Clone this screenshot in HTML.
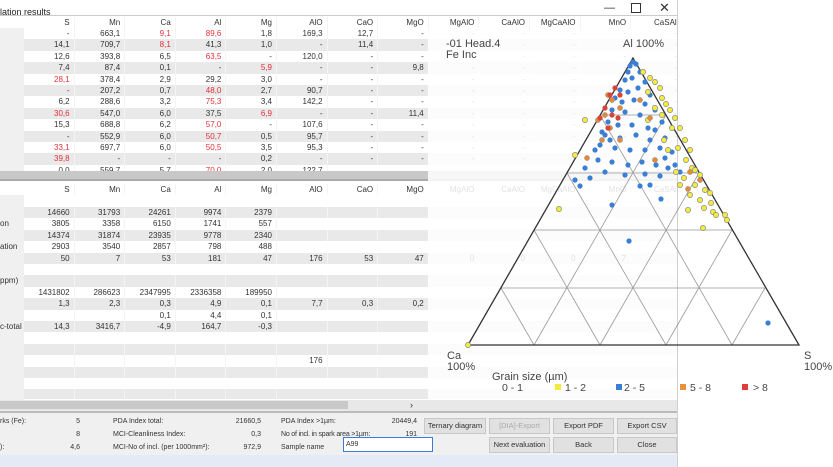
<!DOCTYPE html><html><head><meta charset="utf-8"><style>
*{margin:0;padding:0;box-sizing:border-box}
body{width:833px;height:467px;overflow:hidden;background:#fff;font-family:"Liberation Sans",sans-serif;font-size:8px;color:#333;position:relative}
.a{position:absolute}
.row{position:absolute;left:0;width:678px;height:11.4px;display:flex;line-height:11.4px}
.row .l{width:24px;background:#f0f0f0;flex:none;white-space:nowrap;overflow:visible;padding-left:0}
.row .c{width:50.6px;flex:none;text-align:right;padding-right:4px;border-right:1px solid #f4f4f4}
.g{background:#e9e9e9}
.r{color:#e0303a}
.btn{position:absolute;background:#e1e1e1;border:1px solid #c8c8c8;text-align:center;line-height:14px;height:16px;font-size:7.5px}
.s{font-size:7px}
</style></head><body>
<div class="a" style="left:0;top:0;width:678px;height:467px;background:#fff"></div>
<div class="a" style="left:0;top:7px;font-size:9px;color:#222">lation results</div>
<div class="a" style="left:604px;top:2px;font-size:11px;color:#333">&#8212;</div>
<div class="a" style="left:631px;top:3px;width:10px;height:10px;border:1px solid #333"></div>
<div class="a" style="left:659px;top:0px;font-size:13px;color:#333">&#x2715;</div>
<div class="a" style="left:0;top:15px;width:678px;height:1px;background:#ccc"></div>
<div class="a" style="left:0;top:17px;width:24px;height:155px;background:#f0f0f0"></div>

<div class="row" style="top:17px"><div class="l" style="background:#fff"></div><div class="c">S</div><div class="c">Mn</div><div class="c">Ca</div><div class="c">Al</div><div class="c">Mg</div><div class="c">AlO</div><div class="c">CaO</div><div class="c">MgO</div><div class="c">MgAlO</div><div class="c">CaAlO</div><div class="c">MgCaAlO</div><div class="c">MnO</div><div class="c">CaSAl</div></div>
<div class="row" style="top:28px"><div class="l"></div><div class="c">-</div><div class="c">663,1</div><div class="c r">9,1</div><div class="c r">89,6</div><div class="c">1,8</div><div class="c">169,3</div><div class="c">12,7</div><div class="c">-</div><div class="c">-</div><div class="c">-</div><div class="c">-</div><div class="c">-</div><div class="c">-</div></div>
<div class="row g" style="top:39.4px"><div class="l"></div><div class="c">14,1</div><div class="c">709,7</div><div class="c r">8,1</div><div class="c">41,3</div><div class="c">1,0</div><div class="c">-</div><div class="c">11,4</div><div class="c">-</div><div class="c">-</div><div class="c">-</div><div class="c">-</div><div class="c">-</div><div class="c">-</div></div>
<div class="row" style="top:50.8px"><div class="l"></div><div class="c">12,6</div><div class="c">393,8</div><div class="c">6,5</div><div class="c r">63,5</div><div class="c">-</div><div class="c">120,0</div><div class="c">-</div><div class="c">-</div><div class="c">-</div><div class="c">-</div><div class="c">-</div><div class="c">-</div><div class="c">-</div></div>
<div class="row g" style="top:62.2px"><div class="l"></div><div class="c">7,4</div><div class="c">87,4</div><div class="c">0,1</div><div class="c">-</div><div class="c r">5,9</div><div class="c">-</div><div class="c">-</div><div class="c">9,8</div><div class="c">-</div><div class="c">-</div><div class="c">-</div><div class="c">-</div><div class="c">-</div></div>
<div class="row" style="top:73.6px"><div class="l"></div><div class="c r">28,1</div><div class="c">378,4</div><div class="c">2,9</div><div class="c">29,2</div><div class="c">3,0</div><div class="c">-</div><div class="c">-</div><div class="c">-</div><div class="c">-</div><div class="c">-</div><div class="c">-</div><div class="c">-</div><div class="c">-</div></div>
<div class="row g" style="top:85px"><div class="l"></div><div class="c">-</div><div class="c">207,2</div><div class="c">0,7</div><div class="c r">48,0</div><div class="c">2,7</div><div class="c">90,7</div><div class="c">-</div><div class="c">-</div><div class="c">-</div><div class="c">-</div><div class="c">-</div><div class="c">-</div><div class="c">-</div></div>
<div class="row" style="top:96.4px"><div class="l"></div><div class="c">6,2</div><div class="c">288,6</div><div class="c">3,2</div><div class="c r">75,3</div><div class="c">3,4</div><div class="c">142,2</div><div class="c">-</div><div class="c">-</div><div class="c">-</div><div class="c">-</div><div class="c">-</div><div class="c">-</div><div class="c">-</div></div>
<div class="row g" style="top:107.8px"><div class="l"></div><div class="c r">30,6</div><div class="c">547,0</div><div class="c">6,0</div><div class="c">37,5</div><div class="c r">6,9</div><div class="c">-</div><div class="c">-</div><div class="c">11,4</div><div class="c">-</div><div class="c">-</div><div class="c">-</div><div class="c">-</div><div class="c">-</div></div>
<div class="row" style="top:119.2px"><div class="l"></div><div class="c">15,3</div><div class="c">688,8</div><div class="c">6,2</div><div class="c r">57,0</div><div class="c">-</div><div class="c">107,6</div><div class="c">-</div><div class="c">-</div><div class="c">-</div><div class="c">-</div><div class="c">-</div><div class="c">-</div><div class="c">-</div></div>
<div class="row g" style="top:130.6px"><div class="l"></div><div class="c">-</div><div class="c">552,9</div><div class="c">6,0</div><div class="c r">50,7</div><div class="c">0,5</div><div class="c">95,7</div><div class="c">-</div><div class="c">-</div><div class="c">-</div><div class="c">-</div><div class="c">-</div><div class="c">-</div><div class="c">-</div></div>
<div class="row" style="top:142px"><div class="l"></div><div class="c r">33,1</div><div class="c">697,7</div><div class="c">6,0</div><div class="c r">50,5</div><div class="c">3,5</div><div class="c">95,3</div><div class="c">-</div><div class="c">-</div><div class="c">-</div><div class="c">-</div><div class="c">-</div><div class="c">-</div><div class="c">-</div></div>
<div class="row g" style="top:153.4px"><div class="l"></div><div class="c r">39,8</div><div class="c">-</div><div class="c">-</div><div class="c">-</div><div class="c">0,2</div><div class="c">-</div><div class="c">-</div><div class="c">-</div><div class="c">-</div><div class="c">-</div><div class="c">-</div><div class="c">-</div><div class="c">-</div></div>
<div class="row" style="top:164.8px;height:6px;overflow:hidden"><div class="l"></div><div class="c">0,0</div><div class="c">559,7</div><div class="c">5,7</div><div class="c r">70,0</div><div class="c">2,0</div><div class="c">122,7</div></div>
<div class="a" style="left:0;top:171px;width:678px;height:10px;background:#c8c8c8;border-bottom:2px solid #aaa"></div>

<div class="row" style="top:184px"><div class="l" style="background:#fff"></div><div class="c">S</div><div class="c">Mn</div><div class="c">Ca</div><div class="c">Al</div><div class="c">Mg</div><div class="c">AlO</div><div class="c">CaO</div><div class="c">MgO</div><div class="c">MgAlO</div><div class="c">CaAlO</div><div class="c">MgCaAlO</div><div class="c">MnO</div><div class="c">CaSAl</div></div>
<div class="a" style="left:0;top:195px;width:24px;height:205px;background:#f0f0f0"></div>
<div class="row" style="top:195.6px"><div class="l"></div></div>
<div class="row g" style="top:207px"><div class="l"></div><div class="c">14660</div><div class="c">31793</div><div class="c">24261</div><div class="c">9974</div><div class="c">2379</div><div class="c"></div><div class="c"></div><div class="c"></div></div>
<div class="row" style="top:218.4px"><div class="l">on</div><div class="c">3805</div><div class="c">3358</div><div class="c">6150</div><div class="c">1741</div><div class="c">557</div></div>
<div class="row g" style="top:229.8px"><div class="l"></div><div class="c">14374</div><div class="c">31874</div><div class="c">23935</div><div class="c">9778</div><div class="c">2340</div><div class="c"></div><div class="c"></div><div class="c"></div></div>
<div class="row" style="top:241.2px"><div class="l">ation</div><div class="c">2903</div><div class="c">3540</div><div class="c">2857</div><div class="c">798</div><div class="c">488</div></div>
<div class="row g" style="top:252.6px"><div class="l"></div><div class="c">50</div><div class="c">7</div><div class="c">53</div><div class="c">181</div><div class="c">47</div><div class="c">176</div><div class="c">53</div><div class="c">47</div><div class="c">0</div><div class="c">0</div><div class="c">0</div><div class="c">7</div></div>
<div class="row" style="top:264px"><div class="l"></div></div>
<div class="row g" style="top:275.4px"><div class="l">ppm)</div><div class="c"></div><div class="c"></div><div class="c"></div><div class="c"></div><div class="c"></div><div class="c"></div><div class="c"></div><div class="c"></div></div>
<div class="row" style="top:286.8px"><div class="l"></div><div class="c">1431802</div><div class="c">286623</div><div class="c">2347995</div><div class="c">2336358</div><div class="c">189950</div></div>
<div class="row g" style="top:298.2px"><div class="l"></div><div class="c">1,3</div><div class="c">2,3</div><div class="c">0,3</div><div class="c">4,9</div><div class="c">0,1</div><div class="c">7,7</div><div class="c">0,3</div><div class="c">0,2</div></div>
<div class="row" style="top:309.6px"><div class="l"></div><div class="c"></div><div class="c"></div><div class="c">0,1</div><div class="c">4,4</div><div class="c">0,1</div></div>
<div class="row g" style="top:321px"><div class="l">c-total</div><div class="c">14,3</div><div class="c">3416,7</div><div class="c">-4,9</div><div class="c">164,7</div><div class="c">-0,3</div><div class="c"></div><div class="c"></div><div class="c"></div></div>
<div class="row" style="top:332.4px"><div class="l"></div></div>
<div class="row g" style="top:343.8px"><div class="l"></div><div class="c"></div><div class="c"></div><div class="c"></div><div class="c"></div><div class="c"></div><div class="c"></div><div class="c"></div><div class="c"></div></div>
<div class="row" style="top:355.2px"><div class="l"></div><div class="c"></div><div class="c"></div><div class="c"></div><div class="c"></div><div class="c"></div><div class="c">176</div></div>
<div class="row g" style="top:366.6px"><div class="l"></div><div class="c"></div><div class="c"></div><div class="c"></div><div class="c"></div><div class="c"></div><div class="c"></div><div class="c"></div><div class="c"></div></div>
<div class="row" style="top:378px"><div class="l"></div></div>
<div class="row g" style="top:389.4px;height:10px"><div class="l"></div><div class="c"></div><div class="c"></div><div class="c"></div><div class="c"></div><div class="c"></div></div>
<div class="a" style="left:0;top:400px;width:678px;height:11px;background:#e8e8e8"></div>
<div class="a" style="left:0;top:401px;width:348px;height:8px;background:#c8c8c8"></div>
<div class="a" style="left:410px;top:400px;font-size:9px">&#8250;</div>
<div class="a" style="left:0;top:411px;width:678px;height:2px;background:#bbb"></div>
<div class="a" style="left:0;top:413px;width:678px;height:42px;background:#f0f0f0"></div>
<div class="a" style="left:0;top:455px;width:678px;height:12px;background:#e4ebf6"></div>

<div class="a s" style="left:0;top:418px">rks (Fe):</div><div class="a s" style="left:70px;top:418px;width:10px;text-align:right">5</div>
<div class="a s" style="left:70px;top:431px;width:10px;text-align:right">8</div>
<div class="a s" style="left:0;top:444px">):</div><div class="a s" style="left:60px;top:444px;width:20px;text-align:right">4,6</div>
<div class="a s" style="left:113px;top:418px">PDA Index total:</div><div class="a s" style="left:211px;top:418px;width:50px;text-align:right">21660,5</div>
<div class="a s" style="left:113px;top:431px">MCI-Cleanliness Index:</div><div class="a s" style="left:211px;top:431px;width:50px;text-align:right">0,3</div>
<div class="a s" style="left:113px;top:444px">MCI-No of incl. (per 1000mm²):</div><div class="a s" style="left:211px;top:444px;width:50px;text-align:right">972,9</div>
<div class="a s" style="left:281px;top:418px">PDA Index &gt;1µm:</div><div class="a s" style="left:367px;top:418px;width:50px;text-align:right">20449,4</div>
<div class="a s" style="left:281px;top:431px;letter-spacing:-0.2px">No of incl. in spark area &gt;1µm:</div><div class="a s" style="left:367px;top:431px;width:50px;text-align:right">191</div>
<div class="a s" style="left:281px;top:444px">Sample name</div>
<div class="a" style="left:343px;top:437px;width:90px;height:15px;background:#fff;border:1px solid #3a7bd5;font-size:7px;padding:3px 0 0 2px">A99</div>
<div class="btn" style="left:424px;top:418px;width:62px">Ternary diagram</div>
<div class="btn" style="left:489px;top:418px;width:61px;color:#aaa">[DIA]-Export</div>
<div class="btn" style="left:553px;top:418px;width:61px">Export PDF</div>
<div class="btn" style="left:617px;top:418px;width:60px">Export CSV</div>
<div class="btn" style="left:489px;top:437px;width:61px">Next evaluation</div>
<div class="btn" style="left:553px;top:437px;width:61px">Back</div>
<div class="btn" style="left:617px;top:437px;width:60px">Close</div>

<div class="a" style="left:428px;top:30px;width:405px;height:369px;background:rgba(255,255,255,0.85)"></div>
<div class="a" style="left:678px;top:0;width:155px;height:467px;background:#fff"></div>
<div class="a" style="left:677px;top:0;width:1px;height:467px;background:#d0d0d0"></div>

<svg class="a" style="left:0;top:0" width="833" height="467" viewBox="0 0 833 467" font-family="Liberation Sans, sans-serif">
<g stroke="#999" stroke-width="0.8" fill="none">
<line x1="600" y1="115" x2="666" y2="115"/><line x1="567" y1="173" x2="699" y2="173"/><line x1="534" y1="230" x2="732" y2="230"/><line x1="501" y1="288" x2="765" y2="288"/>
<line x1="534" y1="345" x2="666" y2="115"/><line x1="600" y1="345" x2="699" y2="173"/><line x1="666" y1="345" x2="732" y2="230"/><line x1="732" y1="345" x2="765" y2="288"/>
<line x1="732" y1="345" x2="600" y2="115"/><line x1="666" y1="345" x2="567" y2="173"/><line x1="600" y1="345" x2="534" y2="230"/><line x1="534" y1="345" x2="501" y2="288"/>
</g>
<polygon points="633,58 468,345 799,345" fill="none" stroke="#333" stroke-width="1.3"/>
<g fill="#3b7fd4">
<circle cx="633" cy="62" r="2.6"/><circle cx="630" cy="66" r="2.6"/><circle cx="636" cy="64" r="2.6"/><circle cx="628" cy="72" r="2.6"/><circle cx="640" cy="72" r="2.6"/><circle cx="625" cy="80" r="2.6"/><circle cx="632" cy="78" r="2.6"/><circle cx="645" cy="82" r="2.6"/><circle cx="620" cy="90" r="2.6"/><circle cx="628" cy="92" r="2.6"/><circle cx="638" cy="88" r="2.6"/><circle cx="650" cy="95" r="2.6"/><circle cx="615" cy="98" r="2.6"/><circle cx="622" cy="102" r="2.6"/><circle cx="634" cy="100" r="2.6"/><circle cx="645" cy="104" r="2.6"/><circle cx="612" cy="110" r="2.6"/><circle cx="625" cy="112" r="2.6"/><circle cx="640" cy="115" r="2.6"/><circle cx="655" cy="110" r="2.6"/><circle cx="608" cy="122" r="2.6"/><circle cx="618" cy="125" r="2.6"/><circle cx="632" cy="125" r="2.6"/><circle cx="648" cy="128" r="2.6"/><circle cx="662" cy="122" r="2.6"/><circle cx="605" cy="135" r="2.6"/><circle cx="620" cy="138" r="2.6"/><circle cx="636" cy="135" r="2.6"/><circle cx="650" cy="140" r="2.6"/><circle cx="665" cy="138" r="2.6"/><circle cx="600" cy="145" r="2.6"/><circle cx="615" cy="148" r="2.6"/><circle cx="630" cy="150" r="2.6"/><circle cx="645" cy="150" r="2.6"/><circle cx="660" cy="148" r="2.6"/><circle cx="672" cy="152" r="2.6"/><circle cx="598" cy="160" r="2.6"/><circle cx="612" cy="162" r="2.6"/><circle cx="628" cy="165" r="2.6"/><circle cx="642" cy="162" r="2.6"/><circle cx="656" cy="165" r="2.6"/><circle cx="668" cy="168" r="2.6"/><circle cx="605" cy="172" r="2.6"/><circle cx="625" cy="175" r="2.6"/><circle cx="645" cy="174" r="2.6"/><circle cx="660" cy="176" r="2.6"/><circle cx="675" cy="165" r="2.6"/><circle cx="595" cy="150" r="2.6"/><circle cx="602" cy="132" r="2.6"/><circle cx="585" cy="168" r="2.6"/><circle cx="590" cy="178" r="2.6"/><circle cx="580" cy="186" r="2.6"/><circle cx="640" cy="186" r="2.6"/><circle cx="610" cy="140" r="2.6"/><circle cx="655" cy="130" r="2.6"/><circle cx="665" cy="158" r="2.6"/><circle cx="680" cy="172" r="2.6"/><circle cx="612" cy="205" r="2.6"/><circle cx="629" cy="241" r="2.6"/><circle cx="768" cy="323" r="2.6"/><circle cx="661" cy="199" r="2.6"/><circle cx="575" cy="180" r="2.6"/><circle cx="650" cy="185" r="2.6"/>
</g>
<g fill="#f3ec3a" stroke="#888" stroke-width="0.7">
<circle cx="643" cy="72" r="2.6"/><circle cx="650" cy="78" r="2.6"/><circle cx="655" cy="82" r="2.6"/><circle cx="660" cy="88" r="2.6"/><circle cx="648" cy="92" r="2.6"/><circle cx="662" cy="98" r="2.6"/><circle cx="666" cy="104" r="2.6"/><circle cx="670" cy="110" r="2.6"/><circle cx="655" cy="108" r="2.6"/><circle cx="675" cy="118" r="2.6"/><circle cx="672" cy="128" r="2.6"/><circle cx="680" cy="128" r="2.6"/><circle cx="664" cy="140" r="2.6"/><circle cx="685" cy="140" r="2.6"/><circle cx="678" cy="148" r="2.6"/><circle cx="690" cy="150" r="2.6"/><circle cx="668" cy="150" r="2.6"/><circle cx="686" cy="160" r="2.6"/><circle cx="692" cy="168" r="2.6"/><circle cx="676" cy="172" r="2.6"/><circle cx="700" cy="175" r="2.6"/><circle cx="684" cy="178" r="2.6"/><circle cx="695" cy="185" r="2.6"/><circle cx="705" cy="190" r="2.6"/><circle cx="710" cy="193" r="2.6"/><circle cx="690" cy="195" r="2.6"/><circle cx="700" cy="200" r="2.6"/><circle cx="711" cy="203" r="2.6"/><circle cx="713" cy="212" r="2.6"/><circle cx="704" cy="208" r="2.6"/><circle cx="688" cy="210" r="2.6"/><circle cx="725" cy="215" r="2.6"/><circle cx="727" cy="220" r="2.6"/><circle cx="716" cy="215" r="2.6"/><circle cx="703" cy="228" r="2.6"/><circle cx="575" cy="155" r="2.6"/><circle cx="585" cy="120" r="2.6"/><circle cx="559" cy="209" r="2.6"/><circle cx="468" cy="345" r="2.6"/><circle cx="648" cy="120" r="2.6"/><circle cx="662" cy="115" r="2.6"/><circle cx="680" cy="185" r="2.6"/><circle cx="695" cy="170" r="2.6"/>
</g>
<g fill="#e08a3c" stroke="#999" stroke-width="0.5">
<circle cx="608" cy="95" r="2.6"/><circle cx="612" cy="100" r="2.6"/><circle cx="620" cy="108" r="2.6"/><circle cx="605" cy="115" r="2.6"/><circle cx="598" cy="120" r="2.6"/><circle cx="610" cy="128" r="2.6"/><circle cx="640" cy="100" r="2.6"/><circle cx="650" cy="118" r="2.6"/><circle cx="602" cy="140" r="2.6"/><circle cx="620" cy="140" r="2.6"/><circle cx="655" cy="160" r="2.6"/><circle cx="690" cy="172" r="2.6"/><circle cx="700" cy="180" r="2.6"/><circle cx="587" cy="158" r="2.6"/><circle cx="688" cy="189" r="2.6"/>
</g>
<g fill="#d9443a">
<circle cx="615" cy="88" r="2.6"/><circle cx="610" cy="95" r="2.6"/><circle cx="620" cy="95" r="2.6"/><circle cx="605" cy="108" r="2.6"/><circle cx="612" cy="115" r="2.6"/><circle cx="600" cy="118" r="2.6"/><circle cx="618" cy="118" r="2.6"/><circle cx="608" cy="128" r="2.6"/>
</g>
<g fill="#444" font-size="11">
<text x="446" y="47">-01 Head.4</text><text x="446" y="58">Fe Inc</text>
<text x="623" y="47">Al 100%</text>
<text x="447" y="359">Ca</text><text x="447" y="370">100%</text>
<text x="804" y="359">S</text><text x="804" y="370">100%</text>
<text x="492" y="380">Grain size (µm)</text>
</g>
<g fill="#444" font-size="10.5">
<text x="502" y="391">0 - 1</text><text x="565" y="391">1 - 2</text><text x="624" y="391">2 - 5</text><text x="690" y="391">5 - 8</text><text x="753" y="391">&gt; 8</text>
</g>
<rect x="555" y="384" width="6" height="6" fill="#f3ec3a"/>
<rect x="616" y="384" width="6" height="6" fill="#3b7fd4"/>
<rect x="680" y="384" width="6" height="6" fill="#e8923c"/>
<rect x="742" y="384" width="6" height="6" fill="#e23b3b"/>
</svg>
</body></html>
